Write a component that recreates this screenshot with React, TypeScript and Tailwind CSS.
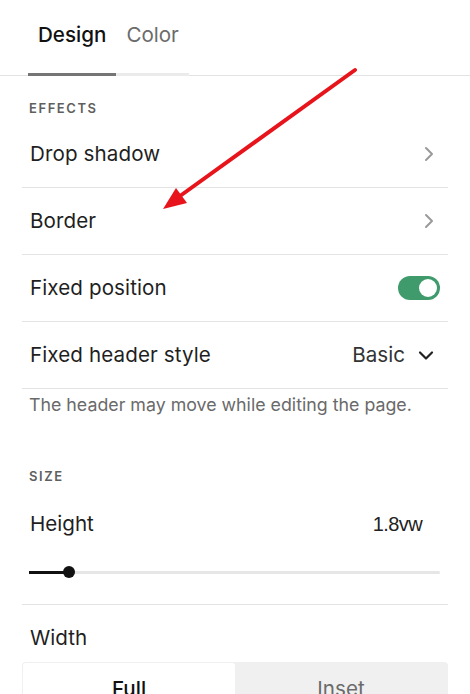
import { useState } from 'react';

const font = { fontFamily: 'Inter, "Liberation Sans", sans-serif' };

function ChevronRight() {
  return (
    <svg width="12" height="18" viewBox="0 0 12 18" fill="none">
      <path d="M3 3l6 6-6 6" stroke="#9a9a9a" strokeWidth="2" strokeLinecap="round" strokeLinejoin="round" />
    </svg>
  );
}

function ChevronDown() {
  return (
    <svg width="16" height="12" viewBox="0 0 16 12" fill="none">
      <path d="M2 3.5l6 6 6-6" stroke="#222" strokeWidth="2.2" strokeLinecap="round" strokeLinejoin="round" />
    </svg>
  );
}

function Row({ label, children }: { label: string; children?: React.ReactNode }) {
  return (
    <div className="flex h-[67px] items-center justify-between border-b border-[#e3e3e3] pl-[8px] pr-[8px]">
      <span className="text-[20.6px] tracking-[0.005em] text-[#1f1f1f]">{label}</span>
      {children}
    </div>
  );
}

export default function App() {
  const [fixed, setFixed] = useState(true);
  const [width, setWidth] = useState<'full' | 'inset'>('full');

  return (
    <div className="relative h-[694px] w-[470px] overflow-hidden bg-white" style={font}>
      {/* tabs */}
      <div className="flex h-[76px] items-end border-b border-[#e3e3e3] pl-[28px]">
        <button className="-mb-px border-b-[3px] border-[#757575] px-[10px] pb-[22px] text-[20.6px] font-medium text-[#111]">
          Design
        </button>
        <button className="-mb-px border-b-[3px] border-[#ebebeb] px-[10px] pb-[22px] text-[20.6px] text-[#6b6b6b]">
          Color
        </button>
      </div>

      <div className="px-[22px]">
        <div className="mt-[24px] pl-[7px] text-[13px] font-semibold leading-[16px] tracking-[0.12em] text-[#5f5f5f]">
          EFFECTS
        </div>
        <div className="mt-[5px]">
          <Row label="Drop shadow">
            <span className="mr-[5px]"><ChevronRight /></span>
          </Row>
          <Row label="Border">
            <span className="mr-[5px]"><ChevronRight /></span>
          </Row>
          <Row label="Fixed position">
            <button
              onClick={() => setFixed(!fixed)}
              className={`flex h-[24px] w-[42px] items-center rounded-full p-[3px] ${fixed ? 'justify-end bg-[#3f9a6c]' : 'justify-start bg-[#cfcfcf]'}`}
            >
              <span className="h-[18px] w-[18px] rounded-full bg-white" />
            </button>
          </Row>
          <Row label="Fixed header style">
            <div className="flex items-center gap-[13px] pr-[6px]">
              <span className="text-[20.6px] text-[#333]">Basic</span>
              <ChevronDown />
            </div>
          </Row>
        </div>
        <p className="pl-[7px] pt-[5px] text-[17.8px] leading-[22px] text-[#6a6a6a]">
          The header may move while editing the page.
        </p>

        <div className="mt-[52px] pl-[7px] text-[13px] font-semibold leading-[16px] tracking-[0.12em] text-[#5f5f5f]">
          SIZE
        </div>
        <div className="mt-[20px] flex h-[40px] items-center justify-between pl-[8px] pr-[26px]">
          <span className="text-[20.6px] text-[#1f1f1f]">Height</span>
          <span className="text-[20px] tracking-[-0.03em] text-[#222]" style={{ fontFamily: '"Liberation Sans", sans-serif' }}>1.8vw</span>
        </div>
        <div className="relative mt-[18px] flex h-[20px] items-center pl-[7px] pr-[8px]">
          <div className="h-[3px] w-full rounded-full bg-[#e6e6e6]" />
          <div className="absolute left-[7px] h-[3px] w-[40px] bg-[#111]" />
          <div className="absolute left-[41px] h-[12px] w-[12px] rounded-full bg-[#111]" />
        </div>
        <div className="mt-[22px] border-t border-[#e3e3e3]" />
        <div className="mt-[19px] pl-[8px] text-[20.6px] leading-[28px] text-[#1f1f1f]">Width</div>
        <div className="mt-[10px] flex h-[50px] rounded-[4px] bg-[#f0f0f0] p-[1px]">
          <button
            onClick={() => setWidth('full')}
            className={`flex-1 rounded-[3px] pt-[4px] text-[20.6px] font-medium ${width === 'full' ? 'bg-white text-[#111]' : 'text-[#6b6b6b]'}`}
          >
            Full
          </button>
          <button
            onClick={() => setWidth('inset')}
            className={`flex-1 rounded-[3px] pt-[4px] text-[20.6px] ${width === 'inset' ? 'bg-white text-[#111]' : 'text-[#6b6b6b]'}`}
          >
            Inset
          </button>
        </div>
      </div>

      {/* annotation arrow */}
      <svg className="pointer-events-none absolute inset-0" width="470" height="694">
        <line x1="355" y1="70" x2="180" y2="196" stroke="#e8141c" strokeWidth="4" strokeLinecap="round" />
        <polygon points="163,209 187,203 176,188" fill="#e8141c" />
      </svg>
    </div>
  );
}
